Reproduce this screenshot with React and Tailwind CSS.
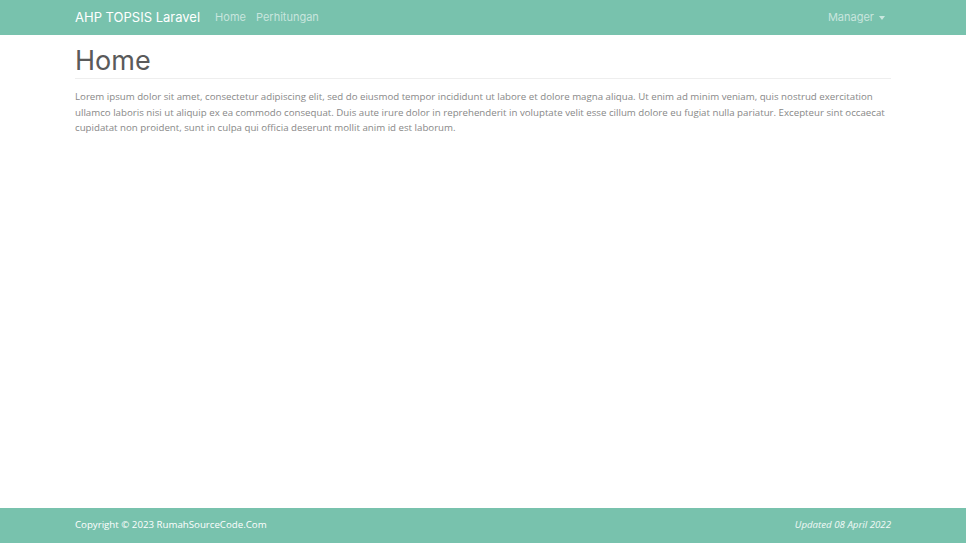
import React from 'react';

const heading = { fontFamily: 'Inter, "Noto Sans", sans-serif' };

const App = () => {
  return (
    <div className="min-h-screen flex flex-col bg-white" style={{ fontFamily: '"Open Sans", "Noto Sans", sans-serif' }}>
      {/* navbar */}
      <nav className="h-[35px] bg-[#78c2ad] flex items-center justify-between px-[75px]" style={heading}>
        <div className="flex items-center">
          <span className="text-[13px] text-white mr-[15px]">AHP TOPSIS Laravel</span>
          <a className="text-[11px] text-white/60 mr-[10px]">Home</a>
          <a className="text-[11px] text-white/60">Perhitungan</a>
        </div>
        <div className="flex items-center text-[11px] text-white/60 pr-[6px]">
          Manager
          <span className="ml-[5px] w-0 h-0 border-l-[3.5px] border-r-[3.5px] border-t-[4px] border-l-transparent border-r-transparent border-t-white/60"></span>
        </div>
      </nav>

      {/* content */}
      <main className="flex-1 px-[75px]">
        <h1 className="text-[27px] leading-none text-[#5a5a5a] pt-[12px] pb-[4px] border-b border-[#eeeeee]" style={heading}>
          Home
        </h1>
        <p className="mt-[10px] text-[9.7px] leading-[15.5px] text-[#888888]">
          Lorem ipsum dolor sit amet, consectetur adipiscing elit, sed do eiusmod tempor incididunt ut labore et dolore magna aliqua. Ut enim ad minim veniam, quis nostrud exercitation ullamco laboris nisi ut aliquip ex ea commodo consequat. Duis aute irure dolor in reprehenderit in voluptate velit esse cillum dolore eu fugiat nulla pariatur. Excepteur sint occaecat cupidatat non proident, sunt in culpa qui officia deserunt mollit anim id est laborum.
        </p>
      </main>

      {/* footer */}
      <footer className="h-[35px] bg-[#78c2ad] flex items-center justify-between px-[75px] text-[9.7px] text-white">
        <span>Copyright © 2023 RumahSourceCode.Com</span>
        <span className="italic text-white/90">Updated 08 April 2022</span>
      </footer>
    </div>
  );
};

export default App;
